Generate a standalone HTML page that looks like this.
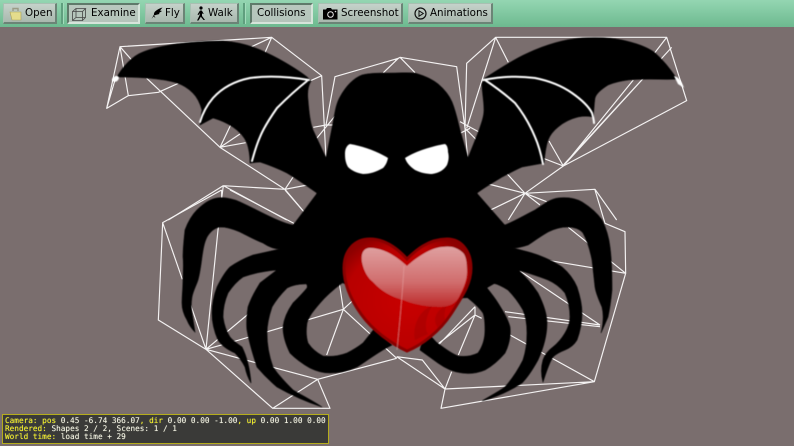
<!DOCTYPE html>
<html><head><meta charset="utf-8"><style>
html,body{margin:0;padding:0;background:#7a6e6e}
#r{position:relative;width:794px;height:446px;overflow:hidden;background:#7a6e6e;font-family:"DejaVu Sans","Liberation Sans",sans-serif}
#bar{position:absolute;left:0;top:0;width:794px;height:27px;background:linear-gradient(#94d6b2,#6db98f)}
.b{position:absolute;top:3px;height:21px;box-sizing:border-box;background:linear-gradient(#c5d2ca,#a9b8ae);border:1px solid #7f9488;border-top-color:#a8c0b2;border-left-color:#a8c0b2;border-bottom:2px solid #6b8476;border-right:2px solid #6b8476;font-size:10.3px;line-height:18px;color:#000;white-space:nowrap}
.b.p{background:linear-gradient(#b9c8be,#b4c4ba);border:2px solid #5f7a6a;border-right-color:#d6e4da;border-bottom-color:#d6e4da;line-height:17px}
.b span{position:absolute;top:0}
.b svg{position:absolute;top:1px}
.s{position:absolute;top:3px;width:2px;height:21px;background:#5f9f7e;border-right:1px solid #a3dcbc}
#st{position:absolute;left:2px;top:414px;width:327px;height:30px;box-sizing:border-box;background:#3a3a38;border:1px solid #b5ad1c;font:7.72px/8.4px "DejaVu Sans Mono",monospace;color:#f4f4e6;padding:1.5px 0 0 2px;white-space:pre;text-rendering:geometricPrecision;text-shadow:0 0 .6px rgba(255,255,220,.6)}
#st i{font-style:normal;color:#f7f31a}
</style></head><body><div id="r">
<svg width="794" height="446" style="position:absolute;left:0;top:0">
<defs>
<filter id="bl" x="-5%" y="-5%" width="110%" height="110%"><feGaussianBlur stdDeviation=".45"/></filter>
<linearGradient id="hi" x1="0" y1="0" x2="0" y2="1"><stop offset="0" stop-color="#dfa0a0"/><stop offset=".6" stop-color="#d06c6c"/><stop offset="1" stop-color="#bd2a2a"/></linearGradient>
<radialGradient id="hb" cx=".5" cy=".55" r=".62"><stop offset="0" stop-color="#c80000"/><stop offset=".78" stop-color="#b80000"/><stop offset="1" stop-color="#8e0000"/></radialGradient>
</defs>
<g fill="none" stroke="#f4f2f2" stroke-width="1.15" stroke-linejoin="round">
<g transform="translate(100 30) scale(.33333)" stroke-width="3.5">
<path d="M45 150L20 235L60 50L515 22L665 137L678 385M20 235L85 197L175 187L235 160M60 50L85 197M60 50L95 90M515 22L455 50M515 22L495 68M665 137L625 155M140 145L360 352L555 478M360 352L392 285M360 352L420 312M360 352L437 338M555 478L580 440M555 478L622 465M555 478L620 555M555 478L370 467M370 467L365 505M370 467L205 570M370 467L560 570M640 292L678 285L700 285M650 325L705 258M678 285L705 140L895 85L850 128"/>
</g>
<g transform="translate(395 30) scale(.33333)" stroke-width="3.5">
<path d="M0 90L15 82L60 128M15 82L185 110L210 295L218 385M210 295L215 100L302 22L815 22L875 212L505 408L390 490L600 478L665 570M302 22L215 295M302 22L340 97M815 22L778 70M830 52L505 408M745 145L505 405M715 150L520 390M505 408L462 333M505 408L445 385M195 275L250 305M195 310L225 295M245 330L210 295M390 490L335 430M390 490L280 462M390 490L270 548M390 490L340 570M390 490L435 525M390 490L455 515"/>
</g>
<g transform="translate(150 190) scale(.33333)" stroke-width="3.5">
<path d="M215 0L38 98L25 390L168 478L368 655L540 655L503 568L740 505M215 0L215 25M240 0L432 100M405 0L470 75M38 98L97 268M205 110L168 478M122 345L168 478M168 478L295 372M168 478L503 568M168 478L250 455L580 358M368 655L503 568M503 568L380 535M580 358L530 495M580 358L568 280M580 358L740 505M580 358L610 330"/>
</g>
<g transform="translate(395 190) scale(.33333)" stroke-width="3.5">
<path d="M5 500L82 510L150 597L5 500M150 597L138 655L598 575L692 250L690 125L630 100L600 0M150 597L598 575M150 597L170 545M240 350L130 465M240 375L125 465M240 375L190 495M240 350L240 375L260 385M330 365L615 405M340 380L615 410M345 435L598 575M370 240L615 405M520 112L692 250M465 212L692 250M82 510L5 500"/>
</g>
</g>
<g filter="url(#bl)">
<path fill="#000" stroke="#000" stroke-width=".6" d="M117 77C122 68 132 56 143 52C160 45 190 41 223 41C240 42 255 47 267 53C282 60 298 70 307 77L311 81C308 86 307 92 308 100C309 112 310 122 313 130L326 158L333 123C335 112 336 104 340 97C346 86 354 78 362 75C370 73 378 73 395 73C405 73 412 72 418 74C428 77 433 80 438 84C445 90 449 95 452 102C456 112 458 122 460 130L468 158L478 133C482 122 484 116 484 110C484 100 482 92 482 84L485 78C500 69 512 60 528 53C545 45 565 39 582 38C600 37 612 38 622 40C640 44 650 49 655 53C664 61 671 70 677 79C665 80 645 78 628 80C620 81 613 83 608 85C600 90 596 94 595 98C594 104 594 112 593 117C588 116 583 116 578 117C570 119 564 122 558 127C553 131 550 135 548 140C546 146 545 152 544 163L522 167C515 170 508 174 502 177C494 182 485 187 477 193C479 200 481 206 485 212C491 217 498 222 505 225C515 221 525 215 535 210C543 205 550 199 558 198C567 197 575 198 582 202C590 207 597 213 602 220C606 228 609 238 610 247C612 262 612 276 612 290C611 300 610 308 608 317L601 333C603 325 604 315 602 307C599 300 596 294 595 287C594 278 593 268 592 260C590 250 587 240 583 233C580 229 574 227 568 227C561 227 554 229 548 232C541 236 534 241 528 245C522 247 518 248 513 248C521 250 530 252 538 255C546 258 555 262 562 267C569 273 574 280 577 287C580 296 582 305 582 313C582 322 580 332 577 340C574 345 570 348 565 350C560 352 556 354 553 357C549 363 546 373 543 382C541 375 541 367 543 360C545 354 549 350 553 347C558 343 562 338 565 333C568 328 570 322 570 317C570 308 568 300 565 293C561 288 555 283 548 280C538 276 528 273 518 270C525 276 532 284 538 293C543 303 547 313 547 323C547 336 543 349 538 360C533 369 528 377 522 383C510 391 496 397 482 401C490 396 498 392 505 387C512 379 518 370 523 360C526 351 527 342 527 333C527 325 526 317 523 310C519 303 514 296 508 290C503 287 498 284 492 283C489 283 487 285 487 288C491 293 495 298 498 303C503 311 508 319 510 327C511 336 509 345 505 353C499 360 492 366 485 370C478 373 470 374 462 373C453 372 445 368 438 363L420 350L425 330L436 342C443 347 450 353 458 356C465 357 472 356 478 353C483 346 485 338 485 330C485 324 485 318 483 313C479 307 473 302 468 298L400 240L342 283C334 289 326 296 320 303C314 310 309 316 307 323C306 330 306 337 308 343C312 349 317 353 323 356C331 357 339 356 347 353C353 350 358 347 363 343L375 328L392 345C376 353 367 361 357 367C348 371 339 373 330 373C323 373 316 371 310 368C303 364 296 359 290 353C286 345 283 336 283 327C284 318 288 310 293 303C298 298 303 293 307 288C308 285 306 283 305 284C299 284 293 285 287 288C281 294 276 300 272 307C269 316 267 325 267 333C267 344 269 356 273 367C279 376 286 383 293 390C303 396 313 401 322 407C307 402 291 395 277 387C270 381 263 374 257 367C253 355 249 342 247 330C246 322 247 314 248 307C251 298 255 291 260 283L277 270C265 271 254 273 243 277C237 281 232 287 228 293C225 300 223 309 223 317C224 324 226 331 230 337C233 341 238 344 242 347C247 357 250 370 251 383C248 378 246 372 245 367C242 361 239 357 235 353C228 350 222 346 218 340C214 331 212 322 212 313C212 304 214 295 217 287C221 279 225 272 230 267C237 262 245 258 253 255L280 249C274 249 269 247 263 243C255 240 248 236 240 232C233 229 227 227 220 227C214 228 210 232 207 237C204 243 203 250 202 257C201 265 200 273 198 280C196 286 193 291 192 297C191 303 191 308 192 313C193 319 194 326 195 332C192 329 189 325 187 320C184 315 182 309 182 303C182 295 183 288 183 280C183 272 184 265 183 257C183 248 184 239 185 230C188 222 192 215 197 210C203 204 210 199 217 198C225 197 233 199 240 202C251 207 262 213 273 218C280 221 286 224 293 225C299 223 303 219 307 215C311 209 314 201 317 193C307 186 297 179 287 173C279 169 269 165 260 162L250 163C250 156 249 149 247 143C244 136 239 131 233 127C227 123 220 120 213 118L200 125C201 118 201 114 202 110C200 103 197 97 193 93C188 88 183 85 177 83C168 80 158 79 147 78C136 77 126 77 117 77Z"/>
<path fill="#000" d="M326 158L468 158L477 193L505 225L513 248L518 270L487 288L468 298L400 300L342 283L305 284L277 270L280 249L293 225L317 193Z"/>
</g>
<g filter="url(#bl)" fill="#fff">
<path d="M350 144C362 146 377 151 388 158C387 163 385 166 383 168C376 172 370 174 363 174C356 173 351 170 348 167C345 162 345 157 345 153C345 149 347 145 350 144Z"/>
<path d="M445 144C433 146 416 151 405 158C407 164 411 167 415 170C421 173 427 174 432 174C439 173 444 170 447 165C449 160 449 156 448 152C448 148 447 145 445 144Z"/>
<path d="M112 79C115 75 118 75 119 78C118 81 116 83 112 81Z"/>
<path d="M674 76C679 77 682 82 684 88L678 84Z"/>
</g>
<g fill="none" stroke="#fff" stroke-width="2" stroke-linecap="round" filter="url(#bl)">
<path d="M309 80C285 76 265 76 250 78C235 81 222 88 213 98C207 105 203 112 200 122"/>
<path d="M307 81C293 92 285 100 277 108C270 118 264 127 260 137C256 146 254 154 252 161"/>
<path d="M483 80C505 76 520 76 535 78C550 81 562 86 572 93C582 100 589 107 592 113C593 117 594 120 594 123"/>
<path d="M485 80C497 88 506 95 515 103C523 113 530 125 535 137C539 146 541 154 543 164"/>
</g>
<g filter="url(#bl)">
<path fill="url(#hb)" stroke="#8a0000" stroke-width="3" d="M407 259C415 251 428 239 447 239C462 239 471 252 471 268C471 285 461 298 451 314C440 331 422 345 407 351C392 344 373 331 361 314C351 300 344 285 344 268C344 250 355 239 370 239C385 239 398 249 407 259Z"/>
<path fill="url(#hi)" d="M407 266C398 258 385 248 370 248C362 248 361 256 362 262C364 272 368 278 373 282C382 292 392 297 403 300C415 305 428 307 440 307C450 307 456 303 459 297C464 287 467 280 467 272C467 262 466 255 462 252C456 247 450 246 443 247C433 247 418 256 407 266Z"/>
<path fill="none" stroke="#e8a8a8" stroke-width="1" opacity=".5" d="M404 266C403 285 400 320 397 350"/>
<path fill="#a00000" opacity=".5" d="M415 340C412 325 420 310 432 306C426 316 424 328 428 334ZM438 328C432 320 436 310 446 306C444 314 444 320 446 320Z"/>
</g>
</svg>
<div id="bar"></div>
<div class="b" style="left:3px;width:54px"><svg width="16" height="16" style="left:3px"><path d="M6 6V3.500H11V6" fill="none" stroke="#9b9b85" stroke-width="1.400"/><path d="M3 7H14V15H5Z" fill="#e4dc8c" stroke="#a8a25a" stroke-width=".6"/></svg><span style="left:21px">Open</span></div>
<div class="s" style="left:61px"></div>
<div class="b p" style="left:67px;width:73px"><svg width="17" height="16" style="left:2px;top:1px"><path d="M1.500 5.500H11.500V14.500H1.500ZM1.500 5.500L5 2.500H14.500L11.500 5.500M14.500 2.500V11.500L11.500 14.500M5 2.500V11.500H14.500M5 11.500L1.500 14.500" fill="none" stroke="#444" stroke-width=".8"/></svg><span style="left:22px">Examine</span></div>
<div class="b" style="left:145px;width:40px"><svg width="16" height="16" style="left:3px"><path d="M2.500 14L5 9.500C4.500 7.500 7 4.500 13.500 2.500L11 5.500L13 6L10 8L10.500 9L7.500 9.800L5 10.500L6.500 13L4.500 11.500Z" fill="#000"/></svg><span style="left:19px">Fly</span></div>
<div class="b" style="left:190px;width:49px"><svg width="16" height="16" style="left:1px"><circle cx="9" cy="3" r="1.600" fill="#000"/><path d="M8 5.500L9.800 5.500L11.800 9L10 8.500L10 11L13 15H11.500L8.800 11.800L6.500 15.500H5L7.500 10.500L8 8L6.500 10L5.500 9.500Z" fill="#000"/></svg><span style="left:17px">Walk</span></div>
<div class="s" style="left:243px"></div>
<div class="b p" style="left:250px;width:63px"><span style="left:5px">Collisions</span></div>
<div class="b" style="left:318px;width:85px"><svg width="18" height="16" style="left:3px"><path d="M1 4.500H4L5 3H9L10 4.500H15.500V14.500H1Z" fill="#000"/><circle cx="8.500" cy="9.500" r="2.800" fill="none" stroke="#e8e8e8" stroke-width="1"/><circle cx="13.500" cy="6.500" r=".8" fill="#ddd"/></svg><span style="left:22px">Screenshot</span></div>
<div class="b" style="left:408px;width:85px"><svg width="16" height="16" style="left:4px;top:2px"><circle cx="7.500" cy="7.500" r="5.500" fill="none" stroke="#111" stroke-width="1.200"/><path d="M6 4.800L10.300 7.500L6 10.200Z" fill="none" stroke="#111" stroke-width="1"/></svg><span style="left:21px">Animations</span></div>
<div id="st"><i>Camera: pos </i>0.45 -6.74 366.07<i>, dir </i>0.00 0.00 -1.00<i>, up </i>0.00 1.00 0.00
<i>Rendered: </i>Shapes 2 / 2, Scenes: 1 / 1
<i>World time: </i>load time + 29</div>
</div></body></html>
